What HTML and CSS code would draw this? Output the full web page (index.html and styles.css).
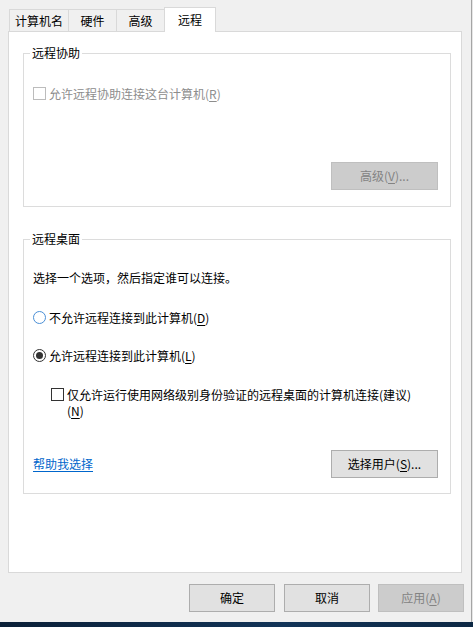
FILE: index.html
```html
<!DOCTYPE html>
<html lang="zh-CN">
<head>
    <meta charset="UTF-8">
    <meta name="viewport" content="width=device-width, initial-scale=1.0">
    <title>系统属性</title>
    <link rel="stylesheet" href="styles.css">
</head>
<body>
    <div class="dialog">
        <div class="tabs">
            <div class="tab tab-name">计算机名</div>
            <div class="tab tab-short">硬件</div>
            <div class="tab tab-short">高级</div>
            <div class="tab tab-active">远程</div>
        </div>

        <div class="panel">
            <fieldset class="group group-assist">
                <legend>远程协助</legend>
                <label class="option disabled">
                    <input type="checkbox" disabled>
                    <span>允许远程协助连接这台计算机(<u>R</u>)</span>
                </label>
                <div class="group-actions">
                    <button class="btn" disabled>高级(<u>V</u>)...</button>
                </div>
            </fieldset>

            <fieldset class="group group-desktop">
                <legend>远程桌面</legend>
                <p class="hint">选择一个选项，然后指定谁可以连接。</p>
                <label class="option option-deny">
                    <input type="radio" name="rdp" class="focused">
                    <span>不允许远程连接到此计算机(<u>D</u>)</span>
                </label>
                <label class="option option-allow">
                    <input type="radio" name="rdp" checked>
                    <span>允许远程连接到此计算机(<u>L</u>)</span>
                </label>
                <label class="option option-nla">
                    <input type="checkbox">
                    <span>仅允许运行使用网络级别身份验证的远程桌面的计算机连接(建议)<br>(<u>N</u>)</span>
                </label>
                <div class="group-footer">
                    <a href="#" class="help-link">帮助我选择</a>
                    <button class="btn">选择用户(<u>S</u>)...</button>
                </div>
            </fieldset>
        </div>

        <div class="dialog-buttons">
            <button class="btn btn-ok">确定</button>
            <button class="btn">取消</button>
            <button class="btn" disabled>应用(<u>A</u>)</button>
        </div>
    </div>
    <div class="taskbar"></div>
</body>
</html>
```

FILE: styles.css
```css
* {
    box-sizing: border-box;
}

body {
    margin: 0;
    width: 473px;
    height: 627px;
    overflow: hidden;
    background: #e6e6e6;
    font-family: "Microsoft YaHei UI", "Noto Sans CJK SC", sans-serif;
    font-size: 12px;
    line-height: 16px;
    color: #000;
}

u {
    text-decoration: underline;
    text-underline-offset: 2px;
}

.dialog {
    width: 472px;
    height: 622px;
    padding: 7px 0 0 8px;
    background: #f0f0f0;
    border-right: 1px solid #a5a5a5;
}

/* tab strip */
.tabs {
    display: flex;
    align-items: flex-end;
    height: 24px;
    margin-left: 1px;
}

.tab {
    height: 22px;
    line-height: 21px;
    text-align: center;
    background: #f0f0f0;
    border: 1px solid #d9d9d9;
    border-bottom: none;
    margin-left: -1px;
}

.tab:first-child {
    margin-left: 0;
}

.tab-name {
    width: 60px;
}

.tab-short {
    width: 49px;
}

.tab-active {
    position: relative;
    z-index: 1;
    width: 52px;
    height: 25px;
    margin-bottom: -1px;
    line-height: 23px;
    background: #fff;
}

/* main panel */
.panel {
    width: 454px;
    height: 542px;
    padding: 0 10px 0 14px;
    background: #fff;
    border: 1px solid #d9d9d9;
}

.group {
    margin: 0;
    padding: 0 12px 0 9px;
    border: 1px solid #dcdcdc;
    min-width: 0;
}

.group legend {
    margin-left: -3px;
    padding: 0 2px;
    line-height: 16px;
}

.group-assist {
    margin-top: 13px;
    height: 162px;
}

.group-desktop {
    margin-top: 24px;
    height: 263px;
}

.option {
    display: flex;
    align-items: flex-start;
}

.option span {
    margin-left: 2px;
}

.option.disabled {
    color: #8d8d8d;
}

.group-assist .option {
    margin-top: 25px;
}

.hint {
    margin: 23px 0 0;
}

.option-deny {
    margin-top: 24px;
}

.option-allow {
    margin-top: 22px;
}

.option-nla {
    margin-top: 23px;
    padding-left: 18px;
}

/* checkbox and radio, flat windows 10 look */
input[type="checkbox"],
input[type="radio"] {
    appearance: none;
    -webkit-appearance: none;
    flex-shrink: 0;
    width: 13px;
    height: 13px;
    margin: 1px 1px 0 0;
    background: #fff;
    border: 1px solid #333;
}

input[type="checkbox"]:disabled {
    border-color: #bcbcbc;
}

input[type="radio"] {
    border-radius: 50%;
    display: grid;
    place-content: center;
}

input[type="radio"].focused {
    border-color: #4a8fd6;
}

input[type="radio"]:checked::before {
    content: "";
    width: 7px;
    height: 7px;
    border-radius: 50%;
    background: #333;
}

.group-actions {
    display: flex;
    justify-content: flex-end;
    margin-top: 60px;
}

.group-footer {
    display: flex;
    justify-content: space-between;
    align-items: center;
    margin-top: 31px;
}

.help-link {
    color: #0066cc;
    text-decoration: underline;
    text-underline-offset: 2px;
}

/* buttons */
.btn {
    width: 107px;
    height: 28px;
    padding: 0;
    font: inherit;
    color: #000;
    background: #e1e1e1;
    border: 1px solid #adadad;
}

.btn:disabled {
    color: #838383;
    background: #cccccc;
    border-color: #bfbfbf;
}

.dialog-buttons {
    display: flex;
    justify-content: flex-end;
    gap: 8px;
    margin-top: 11px;
    padding-right: 7px;
}

.dialog-buttons .btn {
    width: 86px;
}

.dialog-buttons .btn-ok {
    margin-right: 1px;
}

.taskbar {
    height: 5px;
    background: linear-gradient(90deg, #0b2038, #123458 60%, #0d2844);
}
```
